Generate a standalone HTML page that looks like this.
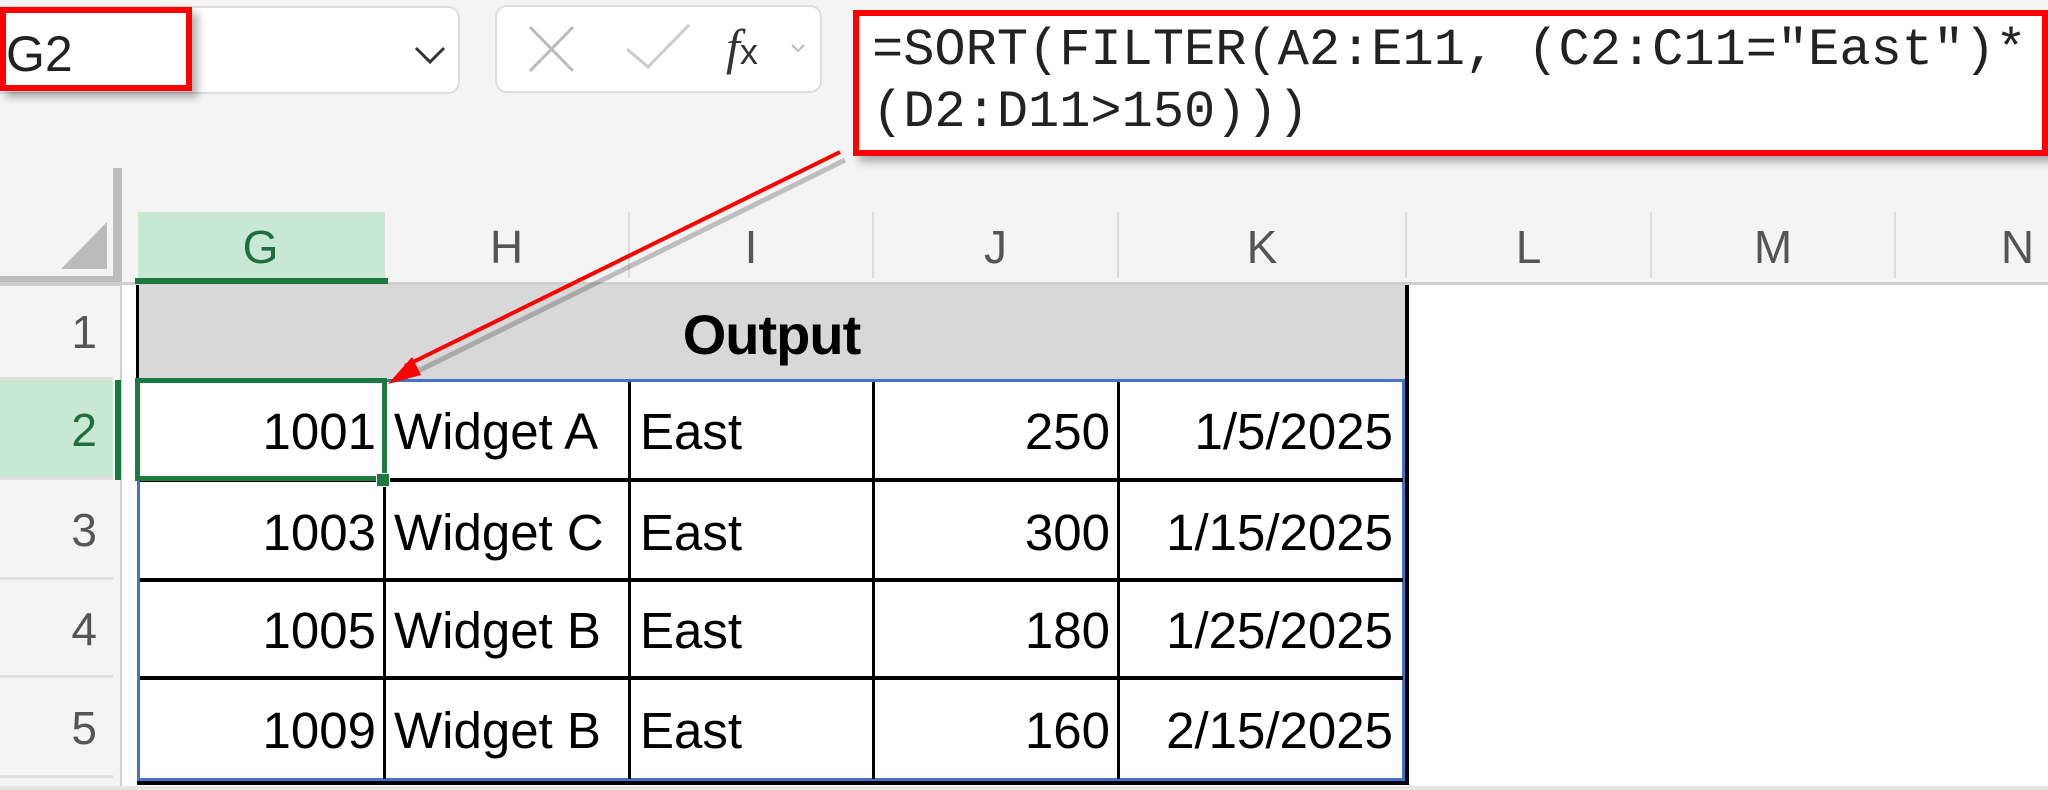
<!DOCTYPE html>
<html><head><meta charset="utf-8"><style>
*{margin:0;padding:0;box-sizing:border-box}
body{width:2048px;height:790px;background:#f4f4f4;position:relative;overflow:hidden;font-family:"Liberation Sans",sans-serif}
.a{position:absolute}
.ch{position:absolute;top:212px;height:66px;font-size:46px;color:#555;text-align:center;line-height:70px;border-right:2px solid #dcdcdc}
.rh{position:absolute;left:0;width:113px;font-size:46px;color:#555;text-align:right;padding-right:16px;border-bottom:3px solid #e0e0e0}
.c{position:absolute;font-size:51px;color:#000;line-height:1;white-space:nowrap}
.vl{position:absolute;width:3px;background:#000}
.hl{position:absolute;height:4px;background:#000}
</style></head><body>
<!-- name box -->
<div class="a" style="left:-10px;top:6px;width:470px;height:88px;background:#fff;border:2px solid #ddd;border-radius:12px"></div>
<div class="a" style="left:0;top:7px;width:192px;height:84px;border:6px solid #f00;box-shadow:6px 6px 8px rgba(0,0,0,.3)"></div>
<div class="a" style="left:6px;top:25px;font-size:50px;color:#222">G2</div>
<svg class="a" style="left:412px;top:42px" width="36" height="24"><path d="M4 6 L18 20 L32 6" fill="none" stroke="#333" stroke-width="3"/></svg>
<!-- fx box -->
<div class="a" style="left:495px;top:5px;width:327px;height:88px;background:#fff;border:2px solid #ddd;border-radius:12px"></div>
<svg class="a" style="left:525px;top:22px" width="290" height="55">
<path d="M5 5 L48 49 M48 5 L5 49" stroke="#bbb" stroke-width="3"/>
<path d="M102 27 L123 45 L164 3" fill="none" stroke="#ccc" stroke-width="3"/>
<path d="M267 23 L273 29 L279 23" fill="none" stroke="#bbb" stroke-width="2"/>
</svg>
<div class="a" style="left:726px;top:18px;font-family:'Liberation Serif',serif;font-style:italic;font-size:50px;color:#333">f<span style="font-size:36px;font-style:normal;font-family:'Liberation Sans'">x</span></div>
<!-- formula -->
<div class="a" style="left:853px;top:10px;width:1195px;height:146px;background:#fff;border:6px solid #f00;box-shadow:6px 6px 8px rgba(0,0,0,.3)"></div>
<div class="a" style="left:872px;top:20px;font-family:'Liberation Mono',monospace;font-size:52px;line-height:62px;color:#222;white-space:pre">=SORT(FILTER(A2:E11, (C2:C11="East")*
(D2:D11>150)))</div>
<!-- headers -->
<div class="a" style="left:113px;top:168px;width:9px;height:117px;background:#bdbdbd"></div>
<div class="a" style="left:0;top:276px;width:122px;height:9px;background:#bdbdbd"></div>
<svg class="a" style="left:61px;top:222px" width="47" height="48"><path d="M46 0 L46 47 L0 47 Z" fill="#bbb"/></svg>
<div class="a" style="left:0;top:282px;width:2048px;height:4px;background:#cfcfcf"></div>
<div class="ch" style="left:138px;width:247px;background:#c8e8d4;color:#1e6e3e">G</div>
<div class="a" style="left:135px;top:278px;width:253px;height:6px;background:#1a7a40"></div>
<div class="ch" style="left:385px;width:245px">H</div>
<div class="ch" style="left:630px;width:244px">I</div>
<div class="ch" style="left:874px;width:245px">J</div>
<div class="ch" style="left:1119px;width:288px">K</div>
<div class="ch" style="left:1407px;width:245px">L</div>
<div class="ch" style="left:1652px;width:244px">M</div>
<div class="ch" style="left:1896px;width:245px">N</div>
<!-- row headers -->
<div class="a" style="left:120px;top:285px;width:2px;height:505px;background:#d0d0d0"></div>
<div class="rh" style="top:285px;height:95px;line-height:95px">1</div>
<div class="rh" style="top:380px;height:100px;line-height:100px;background:#c8e8d4;color:#1e6e3e">2</div>
<div class="a" style="left:115px;top:380px;width:6px;height:100px;background:#1a7a40"></div>
<div class="rh" style="top:480px;height:100px;line-height:100px">3</div>
<div class="rh" style="top:580px;height:98px;line-height:98px">4</div>
<div class="rh" style="top:678px;height:100px;line-height:100px">5</div>
<!-- grid area -->
<div class="a" style="left:122px;top:285px;width:1926px;height:505px;background:#fff"></div>
<div class="a" style="left:136px;top:285px;width:1271px;height:96px;background:#d8d8d8"></div>
<div class="a" style="left:136px;top:285px;width:3px;height:96px;background:#000"></div>
<div class="a" style="left:1405px;top:285px;width:4px;height:500px;background:#000"></div>
<div class="a" style="left:136px;top:302px;width:1271px;text-align:center;font-weight:bold;font-size:56px;letter-spacing:-1px">Output</div>
<!-- table lines -->
<div class="a" style="left:137px;top:379px;width:1268px;height:402px;border:3px solid #4472c4"></div>
<div class="hl" style="left:140px;top:478px;width:1263px"></div>
<div class="hl" style="left:140px;top:578px;width:1263px"></div>
<div class="hl" style="left:140px;top:676px;width:1263px"></div>
<div class="hl" style="left:137px;top:781px;width:1272px"></div>
<div class="vl" style="left:383px;top:382px;height:397px"></div>
<div class="vl" style="left:628px;top:382px;height:397px"></div>
<div class="vl" style="left:872px;top:382px;height:397px"></div>
<div class="vl" style="left:1117px;top:382px;height:397px"></div>
<!-- selection -->
<div class="a" style="left:135px;top:378px;width:252px;height:103px;border:5px solid #1a7a40"></div>
<div class="a" style="left:376px;top:473px;width:14px;height:14px;background:#1a7a40;border:1px solid #fff"></div>
<!-- cells -->
<div class="c" style="right:1672px;top:406px">1001</div>
<div class="c" style="left:394px;top:406px">Widget A</div>
<div class="c" style="left:640px;top:406px">East</div>
<div class="c" style="right:938px;top:406px">250</div>
<div class="c" style="right:655px;top:406px">1/5/2025</div>
<div class="c" style="right:1672px;top:507px">1003</div>
<div class="c" style="left:394px;top:507px">Widget C</div>
<div class="c" style="left:640px;top:507px">East</div>
<div class="c" style="right:938px;top:507px">300</div>
<div class="c" style="right:655px;top:507px">1/15/2025</div>
<div class="c" style="right:1672px;top:605px">1005</div>
<div class="c" style="left:394px;top:605px">Widget B</div>
<div class="c" style="left:640px;top:605px">East</div>
<div class="c" style="right:938px;top:605px">180</div>
<div class="c" style="right:655px;top:605px">1/25/2025</div>
<div class="c" style="right:1672px;top:705px">1009</div>
<div class="c" style="left:394px;top:705px">Widget B</div>
<div class="c" style="left:640px;top:705px">East</div>
<div class="c" style="right:938px;top:705px">160</div>
<div class="c" style="right:655px;top:705px">2/15/2025</div>
<div class="a" style="left:0;top:786px;width:2048px;height:4px;background:#e6e6e6"></div>
<!-- arrow -->
<svg class="a" style="left:0;top:0" width="2048" height="790">
<line x1="845" y1="160" x2="410" y2="375" stroke="rgba(0,0,0,.22)" stroke-width="5"/>
<line x1="840" y1="152" x2="405" y2="366" stroke="#f00" stroke-width="4"/>
<path d="M388 384 L412 357 L421 375 Z" fill="#f00"/>
</svg>
</body></html>
